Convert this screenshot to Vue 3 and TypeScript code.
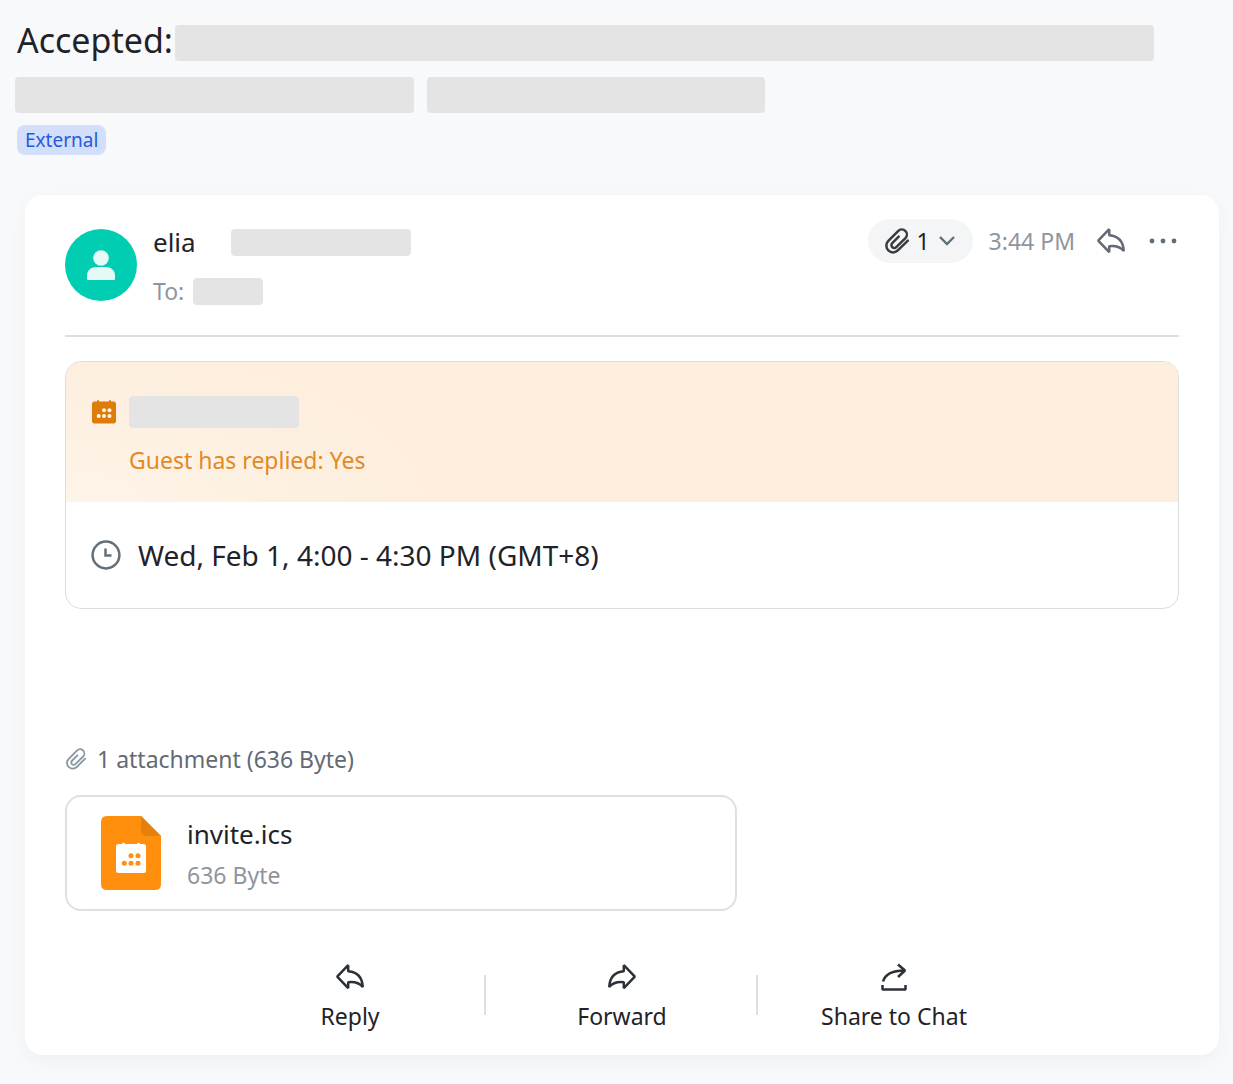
<script setup lang="ts">
import { ref } from 'vue'

interface MailAction {
  id: string
  label: string
}

const actions: MailAction[] = [
  { id: 'reply', label: 'Reply' },
  { id: 'forward', label: 'Forward' },
  { id: 'share', label: 'Share to Chat' },
]

const attachment = { name: 'invite.ics', size: '636 Byte' }
const attachmentsOpen = ref(false)
</script>

<template>
  <main class="page">
    <header class="subject">
      <div class="subject-row first">
        <h1>Accepted:</h1>
        <span class="bar grow"></span>
      </div>
      <div class="subject-row">
        <span class="bar medium"></span>
        <span class="bar short"></span>
      </div>
      <span class="tag">External</span>
    </header>

    <article class="card">
      <header class="mail-head">
        <svg class="avatar" viewBox="0 0 72 72" aria-hidden="true">
          <circle cx="36" cy="36" r="36" fill="#00cdb1" />
          <circle cx="36" cy="29" r="7.8" fill="#e5faf7" />
          <path d="M22 50v-3.500C22 41.500 26 38 31 38h10c5 0 9 3.500 9 8.500V50q0 1-1 1H23q-1 0-1-1z" fill="#e5faf7" />
        </svg>
        <div class="people">
          <div class="person">
            <span class="name">elia</span>
            <span class="bar sender"></span>
          </div>
          <div class="person">
            <span class="to">To:</span>
            <span class="bar recipient"></span>
          </div>
        </div>
        <div class="tools">
          <button class="pill" type="button" aria-label="Attachments" :aria-expanded="attachmentsOpen" @click="attachmentsOpen = !attachmentsOpen">
            <svg class="clip" viewBox="0 0 24 24" aria-hidden="true">
              <path d="M22 11.600l-9 8.900a6.200 6.200 0 0 1-9.200-8.400l9.200-9.300a4.700 4.700 0 0 1 6.800 6.500l-8.500 8.300a2.600 2.600 0 0 1-3.700-3.700l6-5.900" />
            </svg>
            <span>1</span>
            <svg class="chevron" viewBox="0 0 18 12" aria-hidden="true"><path d="M2 2l7 7 7-7" /></svg>
          </button>
          <time class="time">3:44 PM</time>
          <button class="icon-button" type="button" aria-label="Reply">
            <svg class="arrow" viewBox="0 0 30 28" aria-hidden="true">
              <path d="M13.200 2.200L2.200 13.700 13.200 25.200V19.200C19.500 18.400 24 19.600 27.800 24 27.200 13.500 21 8.800 13.200 8.200z" />
            </svg>
          </button>
          <button class="icon-button more" type="button" aria-label="More">
            <svg class="dots" viewBox="0 0 28 6" aria-hidden="true">
              <circle cx="3" cy="3" r="2.400" /><circle cx="14" cy="3" r="2.400" /><circle cx="25" cy="3" r="2.400" />
            </svg>
          </button>
        </div>
      </header>

      <section class="event">
        <div class="event-banner">
          <svg class="calendar" viewBox="0 0 24 24" aria-hidden="true">
            <path d="M2.500 1.500H5V1q0-1 1-1t1 1v.5h10V1q0-1 1-1t1 1v.5h2.500Q24 1.500 24 4v17q0 2.500-2.500 2.500h-19Q0 23.500 0 21V4q0-2.500 2.500-2.500z" fill="#dd7c0b" />
            <g fill="#fff4e6">
              <circle cx="12" cy="10.300" r="2" /><circle cx="17.500" cy="10.300" r="2" />
              <circle cx="6.700" cy="16" r="2" /><circle cx="12" cy="16" r="2" /><circle cx="17.500" cy="16" r="2" />
            </g>
          </svg>
          <div class="event-copy">
            <span class="bar title"></span>
            <p>Guest has replied: Yes</p>
          </div>
        </div>
        <div class="event-time">
          <svg class="clock" viewBox="0 0 30 30" aria-hidden="true">
            <circle cx="15" cy="15" r="13.400" /><path d="M14.500 8.500v7h6" />
          </svg>
          <time>Wed, Feb 1, 4:00 - 4:30 PM (GMT+8)</time>
        </div>
      </section>

      <section class="attachments">
        <h2>
          <svg class="clip small" viewBox="0 0 24 24" aria-hidden="true">
            <path d="M22 11.600l-9 8.900a6.200 6.200 0 0 1-9.200-8.400l9.200-9.300a4.700 4.700 0 0 1 6.800 6.500l-8.500 8.300a2.600 2.600 0 0 1-3.700-3.700l6-5.900" />
          </svg>
          1 attachment ({{ attachment.size }})
        </h2>
        <div class="file">
          <svg class="file-icon" viewBox="0 0 60 74" aria-hidden="true">
            <path d="M6 0h34l20 20v48q0 6-6 6H6q-6 0-6-6V6q0-6 6-6z" fill="#ff8f0c" />
            <path d="M40 0l20 20H46q-6 0-6-6z" fill="#e5800c" />
            <path d="M17.500 28H21q0-1.200 1.500-1.200T24 28h12q0-1.200 1.500-1.200T39 28h3.500q2.500 0 2.500 2.500v24q0 2.500-2.500 2.500h-25Q15 57 15 54.500v-24Q15 28 17.500 28z" fill="#fff" />
            <g fill="#ff8f0c">
              <circle cx="30" cy="39.700" r="2.500" /><circle cx="37" cy="39.700" r="2.500" />
              <circle cx="23.300" cy="47.300" r="2.500" /><circle cx="30" cy="47.300" r="2.500" /><circle cx="37" cy="47.300" r="2.500" />
            </g>
          </svg>
          <div class="file-copy">
            <span class="file-name">{{ attachment.name }}</span>
            <span class="file-size">{{ attachment.size }}</span>
          </div>
        </div>
      </section>

      <footer class="actions">
        <button v-for="action in actions" :key="action.id" type="button" class="action">
          <svg v-if="action.id === 'share'" class="arrow" viewBox="0 0 30 28" aria-hidden="true">
            <path d="M4 18.500C6 11.500 12 7.500 25.500 7.500M19 1.500L26 7.500l-7 6.500M3.500 22V26.500h23V22" />
          </svg>
          <svg v-else class="arrow" :class="{ flipped: action.id === 'forward' }" viewBox="0 0 30 28" aria-hidden="true">
            <path d="M13.200 2.200L2.200 13.700 13.200 25.200V19.200C19.500 18.400 24 19.600 27.800 24 27.200 13.500 21 8.800 13.200 8.200z" />
          </svg>
          <span>{{ action.label }}</span>
        </button>
      </footer>
    </article>
  </main>
</template>

<style>
body {
  background: #f8f9fb;
}
</style>

<style scoped>
.page {
  box-sizing: border-box;
  padding: 17px 14px 29px 15px;
  font-family: "Noto Sans", "Open Sans", sans-serif;
  color: #1f2329;
}
h1, h2, p {
  margin: 0;
  font-weight: 400;
}
button {
  border: 0;
  padding: 0;
  background: none;
  font: inherit;
  color: inherit;
  cursor: pointer;
}
svg {
  display: block;
  flex: none;
}
.bar {
  display: block;
  height: 27px;
  border-radius: 4px;
  background: #e4e4e4;
}
.subject-row {
  display: flex;
  align-items: center;
  gap: 13px;
  height: 52px;
}
.subject-row .bar {
  height: 36px;
}
.subject-row.first {
  gap: 2px;
  padding: 0 65px 0 2px;
}
h1 {
  font-size: 34px;
  line-height: 46px;
  padding-bottom: 6px;
}
.grow { flex: 1; }
.medium { width: 399px; }
.short { width: 338px; }
.tag {
  display: block;
  width: fit-content;
  margin: 4px 2px 0;
  padding: 1px 8px 0;
  border-radius: 8px;
  background: #d3defb;
  color: #245bdb;
  font-size: 19px;
  line-height: 29px;
}
.card {
  margin: 40px 0 0 10px;
  padding: 24px 40px 22px;
  border-radius: 18px;
  background: #fff;
  box-shadow: 0 6px 20px rgba(31, 35, 41, 0.04);
}
.mail-head {
  display: flex;
  align-items: flex-start;
  gap: 16px;
  padding-bottom: 19px;
  border-bottom: 2px solid #dcdfe1;
}
.avatar {
  width: 72px;
  height: 72px;
  margin-top: 10px;
}
.people {
  flex: 1;
  margin-top: -1px;
}
.person {
  display: flex;
  align-items: center;
  height: 49px;
}
.name,
.to {
  padding-bottom: 2px;
}
.name {
  width: 78px;
  font-size: 26px;
}
.sender { width: 180px; }
.to {
  width: 40px;
  font-size: 23px;
  color: #8f959e;
}
.recipient { width: 70px; }
.tools {
  display: flex;
  align-items: center;
  gap: 16px;
  height: 44px;
  padding-right: 2px;
}
.pill {
  display: flex;
  align-items: center;
  gap: 6px;
  height: 44px;
  padding: 0 17px 0 16px;
  border-radius: 22px;
  background: #f4f5f7;
  font-size: 23px;
}
.clip {
  width: 26px;
  height: 28px;
  fill: none;
  stroke: #373c43;
  stroke-width: 2.3;
  stroke-linecap: round;
}
.clip.small {
  width: 22px;
  height: 24px;
  stroke: #8898a3;
  stroke-width: 2;
}
.chevron {
  width: 18px;
  height: 12px;
  margin-left: 2px;
  fill: none;
  stroke: #5f6f78;
  stroke-width: 2.4;
}
.time {
  font-size: 23px;
  color: #8f959e;
}
.icon-button {
  color: #646a73;
  margin-left: 5px;
}
.icon-button.more {
  margin-left: 7px;
}
.arrow {
  width: 30px;
  height: 28px;
  fill: none;
  stroke: currentColor;
  stroke-width: 2.5;
  stroke-linejoin: bevel;
}
.flipped {
  transform: scaleX(-1);
}
.dots {
  width: 28px;
  height: 6px;
  fill: #5f6f78;
}
.event {
  margin-top: 24px;
  border: 1px solid #d8dfe2;
  border-radius: 16px;
  overflow: hidden;
}
.event-banner {
  display: flex;
  gap: 13px;
  padding: 34px 26px 25px;
  background: radial-gradient(ellipse 360px 150px at 0 100%, #fef4e8, #fdeedd);
}
.calendar {
  width: 24px;
  height: 24px;
  margin-top: 4px;
}
.title {
  width: 170px;
  height: 32px;
}
.event-copy p {
  margin-top: 15px;
  font-size: 23px;
  line-height: 34px;
  color: #e28a26;
}
.event-time {
  display: flex;
  align-items: center;
  gap: 17px;
  padding: 0 25px;
  height: 106px;
  font-size: 28px;
}
.clock {
  width: 30px;
  height: 30px;
  fill: none;
  stroke: #646f78;
  stroke-width: 2.5;
}
.attachments {
  margin-top: 132px;
}
h2 {
  display: flex;
  align-items: center;
  gap: 10px;
  font-size: 23px;
  line-height: 36px;
  color: #646a73;
}
.file {
  box-sizing: border-box;
  display: flex;
  align-items: center;
  gap: 26px;
  max-width: 672px;
  height: 116px;
  margin-top: 18px;
  padding: 0 34px;
  border: 2px solid #dee0e3;
  border-radius: 16px;
}
.file-icon {
  width: 60px;
  height: 74px;
}
.file-copy {
  display: flex;
  flex-direction: column;
  gap: 5px;
}
.file-name {
  font-size: 26px;
  line-height: 38px;
}
.file-size {
  font-size: 23px;
  line-height: 34px;
  color: #8f959e;
}
.actions {
  display: flex;
  justify-content: center;
  margin-top: 52px;
}
.action {
  display: flex;
  flex-direction: column;
  align-items: center;
  gap: 8px;
  flex: 0 1 272px;
  font-size: 23px;
  line-height: 34px;
  background: linear-gradient(#dee0e3, #dee0e3) right 12px / 2px 40px no-repeat;
}
.action:last-child {
  background: none;
}
.action .arrow {
  stroke: #2b3138;
}
</style>
